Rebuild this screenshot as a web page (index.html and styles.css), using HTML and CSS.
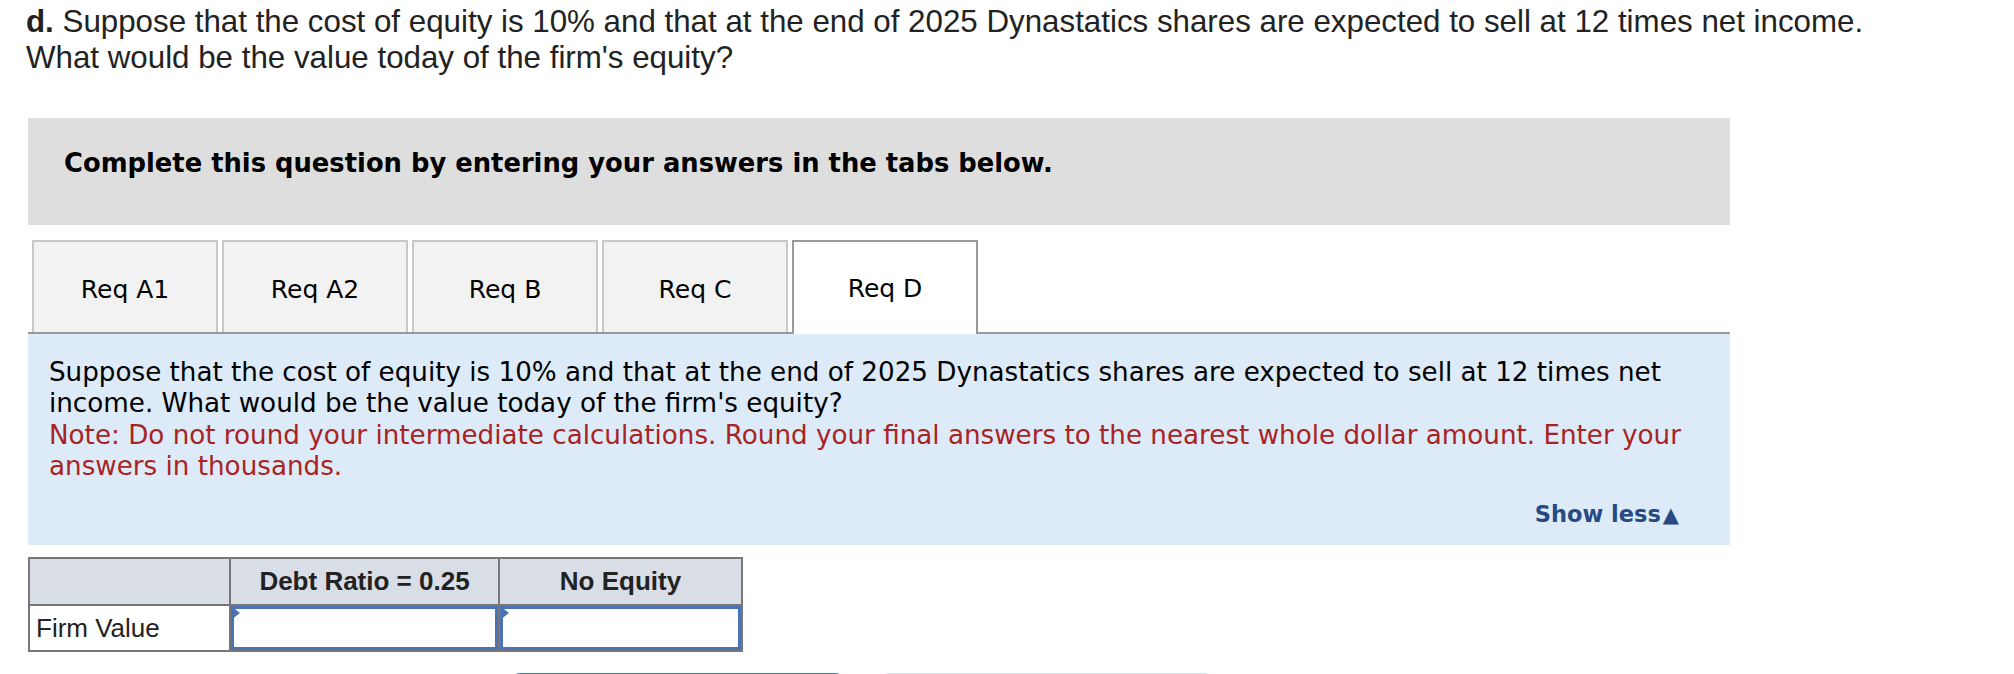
FILE: index.html
```html
<!DOCTYPE html>
<html lang="en">
<head>
    <meta charset="UTF-8">
    <title>Req D</title>
    <link rel="stylesheet" href="styles.css">
</head>
<body>
    <p class="question"><b>d.</b> Suppose that the cost of equity is 10% and that at the end of 2025 Dynastatics shares are expected to sell at 12 times net income.<br>What would be the value today of the firm's equity?</p>

    <div class="instructions">Complete this question by entering your answers in the tabs below.</div>

    <div class="tabs">
        <div class="tab">Req A1</div>
        <div class="tab">Req A2</div>
        <div class="tab">Req B</div>
        <div class="tab">Req C</div>
        <div class="tab active">Req D</div>
    </div>

    <div class="panel">
        <p class="prompt">Suppose that the cost of equity is 10% and that at the end of 2025 Dynastatics shares are expected to sell at 12 times net income. What would be the value today of the firm's equity?<br>
        <span class="note">Note: Do not round your intermediate calculations. Round your final answers to the nearest whole dollar amount. Enter your answers in thousands.</span></p>
        <div class="toggle">Show less<span class="arrow">&#9650;</span></div>
    </div>

    <table class="answers">
        <tr>
            <th class="label-col"></th>
            <th class="val-col">Debt Ratio = 0.25</th>
            <th class="val2-col">No Equity</th>
        </tr>
        <tr>
            <td>Firm Value</td>
            <td class="entry"><div class="box"></div></td>
            <td class="entry"><div class="box"></div></td>
        </tr>
    </table>

    <div class="buttons">
        <div class="btn prev"></div>
        <div class="btn next"></div>
    </div>
</body>
</html>
```

FILE: styles.css
```css
body {
    margin: 0;
    padding: 0;
    background-color: #fff;
    font-family: "DejaVu Sans", Verdana, sans-serif;
    overflow: hidden;
}

.question {
    margin: 0;
    padding: 4px 0 0 26px;
    font-family: "Liberation Sans", Arial, sans-serif;
    font-size: 31.3px;
    line-height: 36px;
    color: #222;
    white-space: nowrap;
}

.instructions {
    width: 1702px;
    height: 107px;
    margin: 42px 0 0 28px;
    box-sizing: border-box;
    padding: 30px 0 0 36px;
    background-color: #dedede;
    font-weight: bold;
    font-size: 25.8px;
    line-height: 30px;
    color: #000;
}

.tabs {
    display: flex;
    gap: 4px;
    width: 1702px;
    margin: 15px 0 0 28px;
    padding-left: 4px;
    box-sizing: border-box;
    border-bottom: 2px solid #999;
}

.tab {
    width: 186px;
    height: 92px;
    box-sizing: border-box;
    display: flex;
    align-items: center;
    justify-content: center;
    padding-top: 4px;
    background-color: #f2f2f2;
    border: 2px solid #c8c8c8;
    border-bottom: none;
    font-size: 25px;
    color: #000;
}

.tab.active {
    background-color: #fff;
    border-color: #999;
    height: 94px;
    padding-top: 0;
    margin-bottom: -2px;
}

.panel {
    width: 1702px;
    height: 211px;
    margin-left: 28px;
    box-sizing: border-box;
    padding: 23px 30px 0 21px;
    background-color: #ddeaf7;
}

.prompt {
    margin: 0;
    font-size: 26.2px;
    line-height: 31.3px;
    color: #000;
}

.note {
    color: #a82424;
}

.toggle {
    margin-top: 17px;
    padding-right: 21px;
    text-align: right;
    font-weight: bold;
    font-size: 22.5px;
    line-height: 31px;
    color: #274a82;
}

.arrow {
    font-size: 21px;
    margin-left: 2px;
}

.answers {
    margin: 12px 0 0 28px;
    border-collapse: collapse;
    font-family: "Liberation Sans", Arial, sans-serif;
    font-size: 26px;
    color: #222;
}

.answers th,
.answers td {
    border: 2px solid #777;
    padding: 0;
}

.answers th {
    height: 45px;
    background-color: #d9dde5;
    font-weight: bold;
    text-align: center;
}

.label-col { width: 199px; }
.val-col { width: 267px; }
.val2-col { width: 241px; }

.answers td {
    height: 44px;
    padding-left: 6px;
}

.answers td.entry {
    padding: 0;
    position: relative;
    vertical-align: top;
}

.box {
    height: 44px;
    box-sizing: border-box;
    border: 3px solid #4a72b5;
    background-color: #fff;
}

.entry::before {
    content: "";
    position: absolute;
    left: 0;
    top: 0;
    border-top: 7px solid transparent;
    border-bottom: 7px solid transparent;
    border-left: 9px solid #4a72b5;
}

.buttons {
    display: flex;
    gap: 40px;
    margin: 21px 0 0 513px;
}

.btn {
    width: 329px;
    height: 30px;
    border-radius: 6px 6px 0 0;
}

.prev { background-color: #4a72b5; }
.next { background-color: #d5e1f0; }
```
